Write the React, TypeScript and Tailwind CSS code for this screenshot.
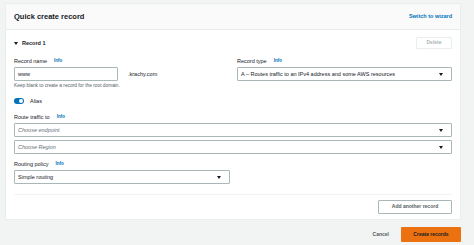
import React from "react";

const font = { fontFamily: '"Liberation Sans", Arial, sans-serif' };

const Info = () => (
  <span className="ml-[7px] text-[4.5px] font-bold text-[#0073bb]">Info</span>
);

const Caret = () => (
  <svg width="4" height="3" viewBox="0 0 4 3" className="shrink-0">
    <path d="M0 0h4L2 3z" fill="#16191f" />
  </svg>
);

const Select = ({
  value,
  placeholder,
  className = "",
}: {
  value?: string;
  placeholder?: string;
  className?: string;
}) => (
  <div
    className={`flex h-[14px] items-center justify-between rounded-[1px] border border-[#aab7b8] bg-white pl-[3px] pr-[8px] ${className}`}
  >
    {value ? (
      <span className="text-[5.5px] text-[#16191f]">{value}</span>
    ) : (
      <span className="text-[5.5px] italic text-[#687078]">{placeholder}</span>
    )}
    <Caret />
  </div>
);

export default function App() {
  return (
    <div
      className="h-[245px] w-[474px] overflow-hidden bg-[#f2f3f3] pl-[5px] pr-[13px] pt-[3px]"
      style={font}
    >
      <div className="border border-[#eaeded] bg-white">
        <div className="flex h-[26px] items-center justify-between border-b border-[#eaeded] bg-[#fafafa] pl-[8px] pr-[8px]">
          <span className="text-[7.5px] font-bold text-[#16191f]">Quick create record</span>
          <span className="text-[5.5px] font-bold text-[#0073bb]">Switch to wizard</span>
        </div>

        <div className="px-[8px] pt-[7px]">
          <div className="flex h-[12px] items-center justify-between">
            <div className="flex items-center gap-[4px]">
              <svg width="4" height="3" viewBox="0 0 4 3">
                <path d="M0 0h4L2 3z" fill="#16191f" />
              </svg>
              <span className="text-[5.5px] font-bold text-[#16191f]">Record 1</span>
            </div>
            <div className="flex h-[12px] w-[36px] items-center justify-center rounded-[1px] border border-[#eaeded] bg-white text-[5px] font-bold text-[#aab7b8]">
              Delete
            </div>
          </div>

          <div className="mt-[8px] grid grid-cols-[215px_215px] gap-x-[8px]">
            <div>
              <div className="flex h-[8px] items-center text-[5.5px] text-[#16191f]">
                Record name
                <Info />
              </div>
              <div className="mt-[2px] flex items-center">
                <div className="flex h-[14px] w-[104px] items-center rounded-[1px] border border-[#aab7b8] pl-[3px] text-[5.5px] text-[#16191f]">
                  www
                </div>
                <span className="ml-[10px] text-[5.5px] text-[#16191f]">.krachy.com</span>
              </div>
              <div className="mt-[1px] text-[4.8px] text-[#545b64]">
                Keep blank to create a record for the root domain.
              </div>
            </div>
            <div>
              <div className="flex h-[8px] items-center text-[5.5px] text-[#16191f]">
                Record type
                <Info />
              </div>
              <Select
                className="mt-[2px]"
                value="A – Routes traffic to an IPv4 address and some AWS resources"
              />
            </div>
          </div>

          <div className="mt-[8px] flex h-[7px] items-center gap-[6px]">
            <div className="relative h-[6px] w-[10px] rounded-full bg-[#0073bb]">
              <div className="absolute right-[1px] top-[1px] h-[4px] w-[4px] rounded-full bg-white" />
            </div>
            <span className="text-[5.5px] text-[#16191f]">Alias</span>
          </div>

          <div className="mt-[9px] flex h-[8px] items-center text-[5.5px] text-[#16191f]">
            Route traffic to
            <Info />
          </div>
          <Select className="mt-[2px]" placeholder="Choose endpoint" />
          <Select className="mt-[3px]" placeholder="Choose Region" />

          <div className="mt-[6px] flex h-[8px] items-center text-[5.5px] text-[#16191f]">
            Routing policy
            <Info />
          </div>
          <Select className="mt-[2px] w-[216px]" value="Simple routing" />

          <div className="mt-[10px] border-t border-[#f2f3f3]" />
          <div className="flex justify-end pb-[5px] pt-[5px]">
            <div className="flex h-[14px] w-[74px] items-center justify-center rounded-[1px] border border-[#aab7b8] bg-white text-[5px] font-bold text-[#545b64]">
              Add another record
            </div>
          </div>
        </div>
      </div>

      <div className="mt-[7px] flex items-center justify-end gap-[12px]">
        <span className="text-[5px] font-bold text-[#545b64]">Cancel</span>
        <div className="flex h-[15px] w-[60px] items-center justify-center rounded-[1px] bg-[#ec7211] text-[5px] font-bold text-[#16191f]">
          Create records
        </div>
      </div>
    </div>
  );
}
